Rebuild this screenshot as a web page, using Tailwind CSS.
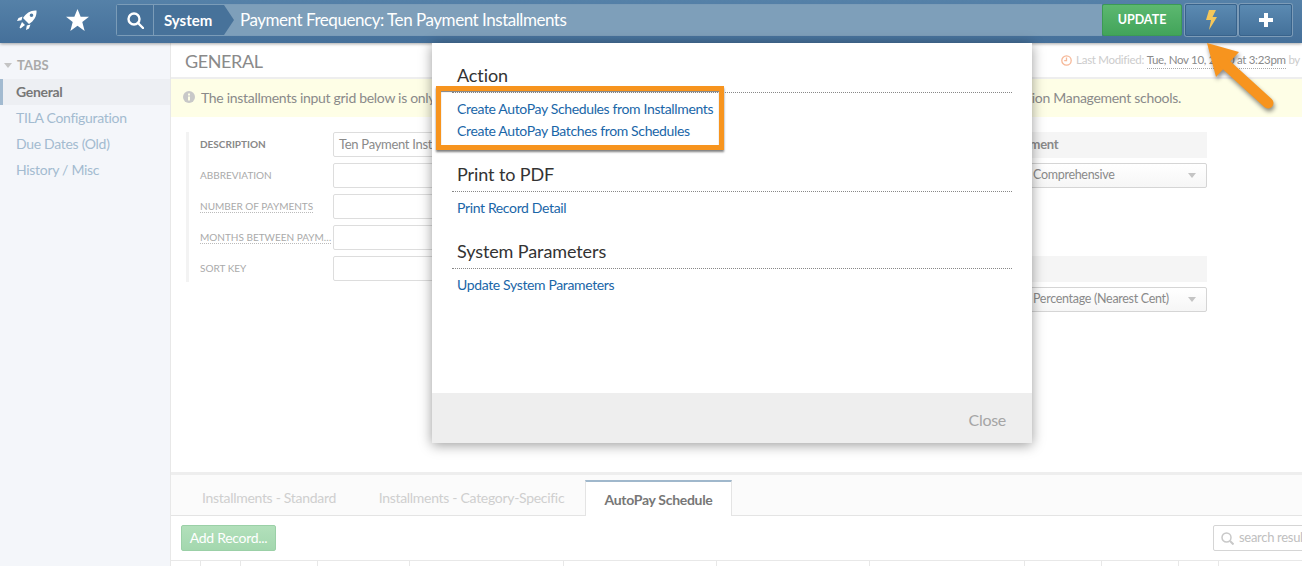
<!DOCTYPE html>
<html lang="en">
<head>
<meta charset="UTF-8">
<title>Payment Frequency</title>
<script src="https://cdn.jsdelivr.net/npm/@tailwindcss/browser@4"></script>
</head>
<body class="font-['Lato',sans-serif] bg-white">
<div class="relative w-[1302px] h-[566px] overflow-hidden flex flex-col tracking-[-0.3px]">

  <!-- top bar -->
  <header class="h-[43px] shrink-0 flex items-center bg-gradient-to-b from-[#5581a8] to-[#45709a] shadow-[0_1px_3px_rgba(0,0,0,0.35)] z-10 pb-[3px]">
    <div class="w-[116px] shrink-0 flex items-center pl-[17px]">
      <svg class="w-[20px] h-[20px] text-white" viewBox="0 0 20 20" fill="currentColor"><path fill-rule="evenodd" d="M19.500.5C14 0 9 3 6 8l6 6c5-3 8-8 7.500-13.500zM14.500 3.500a1.800 1.800 0 1 1 0 3.600 1.800 1.800 0 0 1 0-3.600z"/><path d="M5.500 6.500L1.500 8 0 11l4.500-.8zM13.500 14.500L12 18.500 9 20l.8-4.500zM5 12l3 3-4.500 3.500-1-1z"/></svg>
      <svg class="ml-[29px] w-[23px] h-[22px] text-white" viewBox="0 0 24 23" fill="currentColor"><path d="M12 0l3.300 8H24l-7 5.500L19.500 23 12 17.500 4.500 23 7 13.500 0 8h8.700z"/></svg>
    </div>
    <div class="flex-1 h-[32px] flex items-stretch">
      <div class="flex-1 flex items-stretch rounded-l-[3px] border border-[#7b9cb8] border-r-0 bg-[#7e9fba]">
        <div class="w-[37px] flex items-center justify-center bg-[#47729a] border-r border-[#7b9cb8]">
          <svg class="w-[17px] h-[17px]" viewBox="0 0 17 17" fill="none" stroke="white" stroke-width="2.400"><circle cx="7" cy="7" r="5.500"/><path d="M11 11l5 5" stroke-linecap="round"/></svg>
        </div>
        <div class="relative flex items-center pl-[10px] w-[70px] bg-[#47729a] text-white font-bold text-[15px] tracking-normal">System
          <span class="absolute left-full top-0 w-0 h-0 border-y-[15px] border-y-transparent border-l-[10px] border-l-[#47729a]"></span>
        </div>
        <div class="pl-[16px] flex items-center text-white text-[17px] tracking-[-0.46px]">Payment Frequency: Ten Payment Installments</div>
      </div>
      <button class="w-[80px] rounded-[2px] border border-[#3c9a55] bg-gradient-to-b from-[#5cb870] to-[#42a45a] text-white font-bold text-[12.500px] tracking-normal">UPDATE</button>
      <button class="ml-[3px] w-[52px] rounded-[2px] border border-[#38638c] shadow-[0_0_0_1px_#7d9cb8] bg-gradient-to-b from-[#5b8ab2] to-[#44719a] flex items-center justify-center">
        <svg class="w-[11px] h-[20px]" viewBox="0 0 11 20" fill="#f5c75a"><path d="M3 0h7L6.500 7H11L3 20l2-10H0z"/></svg>
      </button>
      <button class="ml-[2px] mr-[10px] w-[53px] rounded-[2px] border border-[#38638c] shadow-[0_0_0_1px_#7d9cb8] bg-gradient-to-b from-[#5b8ab2] to-[#44719a] flex items-center justify-center">
        <svg class="w-[14px] h-[14px]" viewBox="0 0 14 14" fill="white"><path d="M5 0h4v5h5v4H9v5H5V9H0V5h5z"/></svg>
      </button>
    </div>
  </header>

  <div class="flex-1 flex min-h-0">
    <!-- sidebar -->
    <aside class="w-[171px] shrink-0 bg-[#f4f6fa] border-r border-[#e8e8e8] pt-[12px]">
      <div class="h-[21px] mb-[3px] flex items-center pl-[4px] text-[#aaaaaa] font-bold text-[13px] tracking-normal">
        <span class="w-0 h-0 border-x-[4px] border-x-transparent border-t-[5px] border-t-[#c4c4c4] mr-[5px]"></span>TABS
      </div>
      <nav class="text-[14px] text-[#a3bbd0]">
        <div class="h-[26px] flex items-center pl-[13px] pb-px border-l-[3px] border-[#a2bad0] bg-[#edeff3] text-[#777777] font-bold">General</div>
        <div class="h-[26px] flex items-center pl-[16px] pb-px">TILA Configuration</div>
        <div class="h-[26px] flex items-center pl-[16px] pb-px">Due Dates (Old)</div>
        <div class="h-[26px] flex items-center pl-[16px] pb-px">History / Misc</div>
      </nav>
    </aside>

    <main class="flex-1 min-w-0 flex flex-col">
      <div class="h-[36px] shrink-0 flex items-center justify-between pl-[14px] pr-[2px] border-b-[2px] border-[#eeeeee]">
        <span class="text-[18px] text-[#8a8a8a] tracking-[-0.4px] pt-[3px]">GENERAL</span>
        <span class="flex items-center text-[11.500px] text-[#cccccc] whitespace-nowrap">
          <svg class="w-[11px] h-[11px] mr-[4px]" viewBox="0 0 11 11" fill="none" stroke="#f6b898" stroke-width="1.300"><circle cx="5.500" cy="5.500" r="4.700"/><path d="M5.500 2.500v3.200H3.200"/></svg>
          Last Modified:&nbsp;<span class="text-[#8a8a8a] border-b border-dotted border-[#aaaaaa]">Tue, Nov 10, 2020 at 3:23pm</span>&nbsp;by
        </span>
      </div>
      <div class="h-[38px] shrink-0 flex items-center justify-between bg-[#fefee6] pl-[12px] pr-[121px] pb-[2px] text-[14px] text-[#8a8a8a] whitespace-nowrap">
        <span class="flex items-center">
          <svg class="w-[12px] h-[12px] mr-[6px]" viewBox="0 0 12 12"><circle cx="6" cy="6" r="6" fill="#c8c8c8"/><path d="M5 2.500h2v2H5zM5 5.500h2v4H5z" fill="#fefee6"/></svg>
          The installments input grid below is only
        </span>
        <span>Tuition Management schools.</span>
      </div>

      <div class="flex-1 min-h-0 flex pt-[15px] pl-[15px] pr-[95px]">
        <!-- left fields -->
        <div class="w-[300px] h-[150px] border-l-[3px] border-[#f3f3f3] pl-[11px] flex flex-col gap-[6px] text-[10px] text-[#aaaaaa] tracking-normal">
          <div class="h-[25px] flex items-center">
            <span class="w-[133px] font-bold text-[#888888]">DESCRIPTION</span>
            <span class="flex-1 h-full flex items-center pl-[5px] border border-[#dddddd] rounded-[2px] text-[13px] text-[#8a8a8a] tracking-[-0.3px] whitespace-nowrap overflow-hidden">Ten Payment Installments</span>
          </div>
          <div class="h-[25px] flex items-center"><span class="w-[133px]">ABBREVIATION</span><span class="flex-1 h-full border border-[#dddddd] rounded-[2px]"></span></div>
          <div class="h-[25px] flex items-center"><span class="w-[133px]"><span class="border-b border-dotted border-[#bbbbbb]">NUMBER OF PAYMENTS</span></span><span class="flex-1 h-full border border-[#dddddd] rounded-[2px]"></span></div>
          <div class="h-[25px] flex items-center"><span class="w-[133px]"><span class="border-b border-dotted border-[#bbbbbb] whitespace-nowrap">MONTHS BETWEEN PAYM…</span></span><span class="flex-1 h-full border border-[#dddddd] rounded-[2px]"></span></div>
          <div class="h-[25px] flex items-center"><span class="w-[133px]">SORT KEY</span><span class="flex-1 h-full border border-[#dddddd] rounded-[2px]"></span></div>
        </div>
        <!-- right fields -->
        <div class="ml-auto w-[227px] h-[180px] flex flex-col text-[12.500px] text-[#8a8a8a]">
          <div class="h-[26px] flex items-center bg-[#f5f5f5] pl-[17px] text-[13px] font-bold">Installment</div>
          <div class="mt-[5px] h-[25px] flex items-center justify-between pl-[52px] pr-[10px] border border-[#d5d5d5] rounded-[2px] bg-gradient-to-b from-white to-[#f6f6f6]">Comprehensive<span class="w-0 h-0 border-x-[4px] border-x-transparent border-t-[5px] border-t-[#c4c4c4]"></span></div>
          <div class="mt-[68px] h-[26px] bg-[#f5f5f5]"></div>
          <div class="mt-[5px] h-[25px] flex items-center justify-between pl-[52px] pr-[10px] border border-[#d5d5d5] rounded-[2px] bg-gradient-to-b from-white to-[#f6f6f6]">Percentage (Nearest Cent)<span class="w-0 h-0 border-x-[4px] border-x-transparent border-t-[5px] border-t-[#c4c4c4]"></span></div>
        </div>
      </div>

      <!-- lower panel -->
      <div class="shrink-0 border-t-[3px] border-[#eeeeee]">
        <div class="h-[41px] flex items-end bg-[#fbfbfb] border-b border-[#e4e4e4] pl-[9px] text-[14px] text-[#cfcfcf]">
          <div class="h-[36px] w-[178px] flex items-center justify-center">Installments - Standard</div>
          <div class="h-[36px] w-[227px] flex items-center justify-center">Installments - Category-Specific</div>
          <div class="h-[36px] w-[147px] -mb-px flex items-center justify-center bg-white border-x border-[#e4e4e4] border-t-[2px] border-t-[#a0b8cc] text-[#777777] font-bold">AutoPay Schedule</div>
        </div>
        <div class="h-[44px] flex items-start justify-between pt-[9px] pl-[10px]">
          <button class="w-[95px] h-[26px] pb-[2px] rounded-[2px] border border-[#9bd0a7] bg-gradient-to-b from-[#b2e0bb] to-[#a3d7ae] text-white text-[14px]">Add Record...</button>
          <div class="w-[120px] h-[26px] -mr-[31px] flex items-center pl-[7px] border border-[#d5d5d5] rounded-[2px] text-[13px] text-[#c0c0c0] whitespace-nowrap overflow-hidden">
            <svg class="w-[13px] h-[13px] mr-[5px] shrink-0" viewBox="0 0 13 13" fill="none" stroke="#c8c8c8" stroke-width="1.500"><circle cx="5.500" cy="5.500" r="4.500"/><path d="M9 9l3.500 3.500" stroke-width="2"/></svg>
            search results
          </div>
        </div>
        <div class="h-[6px] flex border-t border-[#e8e8e8]">
          <div class="w-[30px] border-r border-[#e8e8e8]"></div>
          <div class="w-[40px] border-r border-[#e8e8e8]"></div>
          <div class="w-[77px] border-r border-[#e8e8e8]"></div>
          <div class="w-[92px] border-r border-[#e8e8e8]"></div>
          <div class="w-[154px] border-r border-[#e8e8e8]"></div>
          <div class="w-[153px] border-r border-[#e8e8e8]"></div>
          <div class="w-[153px] border-r border-[#e8e8e8]"></div>
          <div class="w-[155px] border-r border-[#e8e8e8]"></div>
          <div class="w-[77px] border-r border-[#e8e8e8]"></div>
          <div class="w-[77px] border-r border-[#e8e8e8]"></div>
          <div class="w-[40px] border-r border-[#e8e8e8]"></div>
        </div>
      </div>
    </main>
  </div>

  <!-- modal -->
  <div class="absolute left-[432px] top-[43px] z-20 w-[600px] h-[400px] bg-white flex flex-col shadow-[0_2px_12px_rgba(0,0,0,0.4)]">
    <div class="flex-1 pl-[20px] pr-[20px] pt-[21px] text-[#1a66a8] text-[14px] tracking-[-0.36px]">
      <h3 class="text-[18px] leading-[22px] text-[#333333] tracking-[-0.1px] pl-[5px] pb-[6px] border-b border-dotted border-[#888888]">Action</h3>
      <div class="pl-[5px] pt-[5px] leading-[22px]">
        <div>Create AutoPay Schedules from Installments</div>
        <div>Create AutoPay Batches from Schedules</div>
      </div>
      <h3 class="mt-[21px] text-[18px] leading-[22px] text-[#333333] tracking-[-0.1px] pl-[5px] pb-[6px] border-b border-dotted border-[#888888]">Print to PDF</h3>
      <div class="pl-[5px] pt-[5px] leading-[22px]">Print Record Detail</div>
      <h3 class="mt-[21px] text-[18px] leading-[22px] text-[#333333] tracking-[-0.1px] pl-[5px] pb-[6px] border-b border-dotted border-[#888888]">System Parameters</h3>
      <div class="pl-[5px] pt-[5px] leading-[22px]">Update System Parameters</div>
    </div>
    <div class="h-[50px] shrink-0 bg-[#eeeeee] flex items-center justify-end pr-[26px] pt-[3px] text-[16px] text-[#a5a5a5]">Close</div>
  </div>

  <!-- annotation: highlight box and arrow -->
  <div class="absolute left-[436px] top-[86px] z-30 w-[288px] h-[64px] border-[5px] border-[#f7941e] shadow-[0_2px_2px_rgba(0,0,0,0.5),inset_0_1px_1px_rgba(0,0,0,0.5)]"></div>
  <svg class="absolute left-[1195px] top-[35px] z-30 w-[95px] h-[90px] drop-shadow-[1px_3px_2px_rgba(0,0,0,0.45)]" viewBox="0 0 95 90">
    <path d="M12 8L44 17L21 42Z" fill="#f7941e"/>
    <path d="M28 27L73 68" stroke="#f7941e" stroke-width="11" stroke-linecap="round"/>
  </svg>
</div>
</body>
</html>
